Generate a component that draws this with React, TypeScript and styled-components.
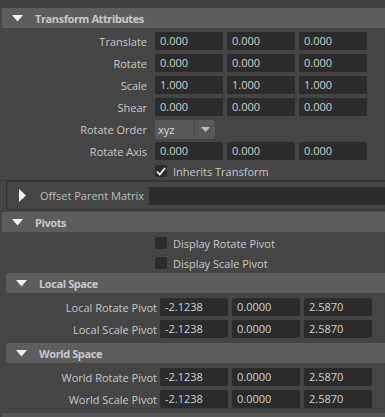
import React from "react"
import styled, { createGlobalStyle } from "styled-components"

const GlobalStyle = createGlobalStyle`
  html, body {
    margin: 0;
    padding: 0;
    background: #444444;
  }
  body {
    font-family: "Open Sans", "Noto Sans", sans-serif;
    font-size: 11px;
    color: #c8c8c8;
    overflow: hidden;
  }
`

const Page = styled.div`
  width: 385px;
  height: 417px;
  overflow: hidden;
  background-color: #444444;
  background-image: radial-gradient(circle, #4a4a4a 0.6px, transparent 0.9px);
  background-size: 4px 4px;
`

const TopBand = styled.div`
  height: 8px;
  background: #3f3f3f;
`

const Header = styled.div<{ $indent?: number }>`
  display: flex;
  align-items: center;
  height: 20px;
  margin-left: ${(p) => p.$indent || 2}px;
  background: #5d5d5d;
  border-radius: 2px 0 0 2px;
  font-weight: 700;
  color: #c9c9c9;
`

const CaretBox = styled.span`
  display: flex;
  align-items: center;
  justify-content: center;
  width: 26px;
  margin-left: 2px;
  flex: none;
`

const Title = styled.span<{ $tight?: boolean }>`
  margin-left: 5px;
  white-space: nowrap;
  letter-spacing: ${(p) => (p.$tight ? "-0.4px" : "0")};
`

const Body = styled.div<{ $top?: number; $bottom?: number }>`
  display: flex;
  flex-direction: column;
  padding-top: ${(p) => p.$top ?? 4}px;
  padding-bottom: ${(p) => p.$bottom ?? 0}px;
`

const Rows = styled.div`
  display: flex;
  flex-direction: column;
  gap: 4px;
`

const Row = styled.div`
  display: flex;
  align-items: center;
  height: 18px;
`

const Label = styled.span<{ $width: number; $gap: number }>`
  width: ${(p) => p.$width}px;
  padding-right: ${(p) => p.$gap}px;
  box-sizing: border-box;
  text-align: right;
  white-space: nowrap;
  flex: none;
`

const Fields = styled.div`
  display: flex;
  gap: 4px;
`

const Field = styled.div`
  width: 68px;
  height: 18px;
  box-sizing: border-box;
  padding-left: 5px;
  background: #2b2b2b;
  border-radius: 2px;
  color: #cdd2d6;
  line-height: 18px;
  white-space: nowrap;
`

const Dropdown = styled.div`
  display: flex;
  height: 19px;
  width: 60px;
  background: #585858;
  border-radius: 2px;
  overflow: hidden;
`

const DropValue = styled.span`
  flex: 1;
  padding-left: 3px;
  line-height: 19px;
  color: #dcdcdc;
`

const DropArrow = styled.span`
  display: flex;
  align-items: center;
  justify-content: center;
  width: 20px;
  border-left: 1px solid #4a4a4a;
`

const CheckRow = styled.div<{ $height: number; $top?: number; $bottom?: number }>`
  display: flex;
  align-items: center;
  height: ${(p) => p.$height}px;
  margin-top: ${(p) => p.$top ?? 0}px;
  margin-bottom: ${(p) => p.$bottom ?? 0}px;
  padding-left: 155px;
`

const Box = styled.span`
  display: flex;
  align-items: center;
  justify-content: center;
  width: 12px;
  height: 12px;
  background: #2b2b2b;
  border-radius: 2px;
  margin-right: 6px;
`

const Divider = styled.div`
  height: 1px;
  background: #383838;
`

const Collapsed = styled.div`
  display: flex;
  align-items: center;
  height: 27px;
  margin-left: 6px;
  border: 1px solid #333333;
  border-right: none;
  border-radius: 3px 0 0 3px;
  color: #bdbdbd;
  margin-bottom: 2px;
`

const WideField = styled.div`
  flex: 1;
  height: 18px;
  margin-left: 5px;
  background: #2b2b2b;
  border-radius: 2px 0 0 2px;
`

const BottomLine = styled.div`
  margin-top: 5px;
  height: 4px;
  background: #555555;
  margin-left: 2px;
`

const Caret = ({ open }: { open: boolean }) =>
  open ? (
    <svg width="11" height="7" viewBox="0 0 11 7">
      <polygon points="0,0 11,0 5.5,6.5" fill="#f2f2f2" />
    </svg>
  ) : (
    <svg width="7" height="13" viewBox="0 0 7 13">
      <polygon points="0,0 7,6.5 0,13" fill="#f2f2f2" />
    </svg>
  )

const Check = () => (
  <svg width="10" height="9" viewBox="0 0 10 9">
    <polyline points="1,4.5 3.8,7.5 9,1" fill="none" stroke="#f0f0f0" strokeWidth="1.8" />
  </svg>
)

type RowProps = { label: string; values: string[]; width: number; gap: number }

const ValueRow = ({ label, values, width, gap }: RowProps) => (
  <Row>
    <Label $width={width} $gap={gap}>{label}</Label>
    <Fields>
      {values.map((v, i) => (
        <Field key={i}>{v}</Field>
      ))}
    </Fields>
  </Row>
)

const pivot = ["-2.1238", "0.0000", "2.5870"]

export default function App() {
  return (
    <Page>
      <GlobalStyle />
      <TopBand />
      <Header>
        <CaretBox><Caret open /></CaretBox>
        <Title $tight>Transform Attributes</Title>
      </Header>
      <Body>
        <Rows>
          <ValueRow label="Translate" values={["0.000", "0.000", "0.000"]} width={155} gap={8} />
          <ValueRow label="Rotate" values={["0.000", "0.000", "0.000"]} width={155} gap={8} />
          <ValueRow label="Scale" values={["1.000", "1.000", "1.000"]} width={155} gap={8} />
          <ValueRow label="Shear" values={["0.000", "0.000", "0.000"]} width={155} gap={8} />
          <Row>
            <Label $width={155} $gap={8}>Rotate Order</Label>
            <Dropdown>
              <DropValue>xyz</DropValue>
              <DropArrow>
                <svg width="9" height="5" viewBox="0 0 9 5">
                  <polygon points="0,0 9,0 4.5,5" fill="#bdbdbd" />
                </svg>
              </DropArrow>
            </Dropdown>
          </Row>
          <ValueRow label="Rotate Axis" values={["0.000", "0.000", "0.000"]} width={155} gap={8} />
        </Rows>
        <CheckRow $height={14} $top={4} $bottom={2}>
          <Box><Check /></Box>
          <span>Inherits Transform</span>
        </CheckRow>
        <Divider />
        <Collapsed>
          <CaretBox><Caret open={false} /></CaretBox>
          <Title>Offset Parent Matrix</Title>
          <WideField />
        </Collapsed>
      </Body>
      <Header>
        <CaretBox><Caret open /></CaretBox>
        <Title $tight>Pivots</Title>
      </Header>
      <Body $top={1}>
        <CheckRow $height={20}>
          <Box />
          <span>Display Rotate Pivot</span>
        </CheckRow>
        <CheckRow $height={20}>
          <Box />
          <span>Display Scale Pivot</span>
        </CheckRow>
        <Header $indent={6}>
          <CaretBox><Caret open /></CaretBox>
          <Title $tight>Local Space</Title>
        </Header>
        <Body $top={5} $bottom={5}>
          <Rows>
            <ValueRow label="Local Rotate Pivot" values={pivot} width={160} gap={3} />
            <ValueRow label="Local Scale Pivot" values={pivot} width={160} gap={3} />
          </Rows>
        </Body>
        <Header $indent={6}>
          <CaretBox><Caret open /></CaretBox>
          <Title $tight>World Space</Title>
        </Header>
        <Body $top={5}>
          <Rows>
            <ValueRow label="World Rotate Pivot" values={pivot} width={160} gap={3} />
            <ValueRow label="World Scale Pivot" values={pivot} width={160} gap={3} />
          </Rows>
        </Body>
        <BottomLine />
      </Body>
    </Page>
  )
}
